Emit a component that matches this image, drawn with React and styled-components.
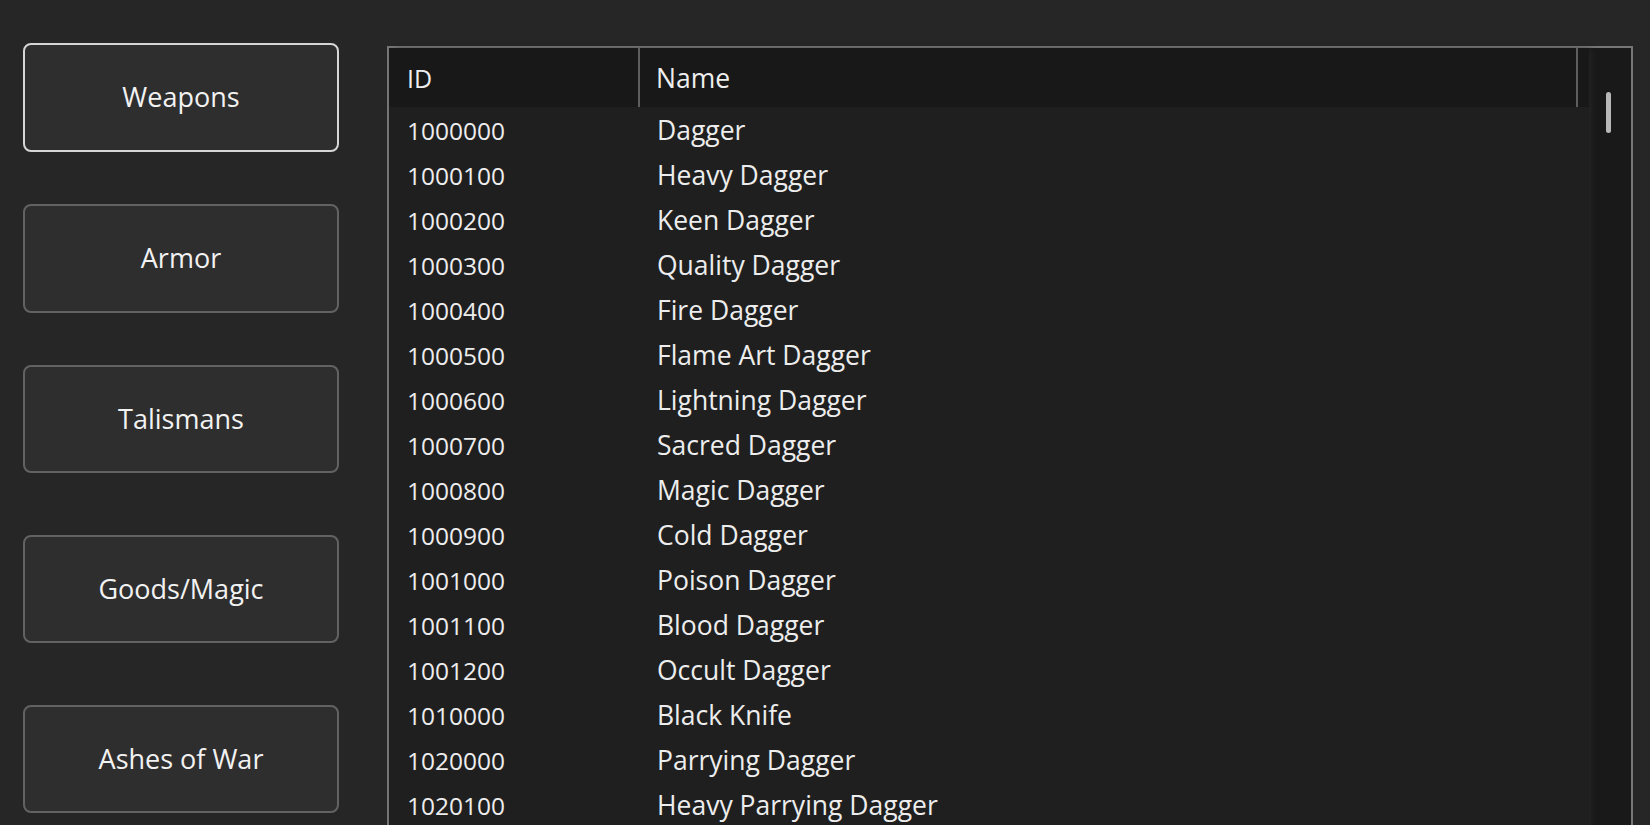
import React from "react";
import styled, { createGlobalStyle } from "styled-components";

const Global = createGlobalStyle`
  html, body { margin: 0; padding: 0; background: #262626; }
  body { font-family: "Open Sans", "Noto Sans", "Liberation Sans", sans-serif; color: #ececec; }
`;

const Page = styled.div`
  display: flex;
  height: 825px;
  overflow: hidden;
  background: #262626;
`;

const Sidebar = styled.nav`
  display: flex;
  flex-direction: column;
  padding: 43px 0 0 23px;
  width: 316px;
  flex-shrink: 0;
`;

const CategoryButton = styled.button`
  box-sizing: border-box;
  width: 316px;
  height: ${(p) => p.$h}px;
  margin-top: ${(p) => p.$mt}px;
  border-radius: 8px;
  border: 2px solid ${(p) => (p.$active ? "#d6d6d6" : "#626262")};
  background: #2e2e2e;
  color: #f2f2f2;
  font-family: "Open Sans", "Noto Sans", sans-serif;
  font-size: 27px;
  display: flex;
  align-items: center;
  justify-content: center;
  padding: 0 0 2px;
  cursor: pointer;
`;

const Main = styled.main`
  margin-left: 48px;
  padding-top: 46px;
  width: 1246px;
  flex-shrink: 0;
`;

const Panel = styled.section`
  box-sizing: border-box;
  height: 900px;
  border: 2px solid #767676;
  display: flex;
  background: #1f1f1f;
`;

const Table = styled.div`
  flex: 1;
  display: flex;
  flex-direction: column;
  box-shadow: 4px 0 6px -2px rgba(40, 40, 40, 0.9);
  background: #1f1f1f;
  position: relative;
  z-index: 1;
`;

const HeaderRow = styled.div`
  display: grid;
  grid-template-columns: 251px 938px 1fr;
  height: 59px;
  background: #181818;
`;

const HeaderCell = styled.div`
  display: flex;
  align-items: center;
  padding-left: ${(p) => p.$pad}px;
  padding-top: 1px;
  font-size: ${(p) => p.$size || 26}px;
  color: #eeeeee;
  border-right: ${(p) => (p.$divider ? "2px solid #5e5e5e" : "none")};
`;

const Row = styled.div`
  display: grid;
  grid-template-columns: 251px 1fr;
  height: 45px;
  align-items: center;
`;

const Cell = styled.div`
  padding-left: ${(p) => p.$pad}px;
  font-size: ${(p) => p.$size}px;
  color: #ededed;
  white-space: nowrap;
  padding-top: 1px;
`;

const ScrollTrack = styled.div`
  width: 42px;
  flex-shrink: 0;
  background: #191919;
  display: flex;
  justify-content: flex-start;
  padding-left: 17px;
  box-sizing: border-box;
`;

const Thumb = styled.div`
  width: 5px;
  height: 41px;
  margin-top: 44px;
  border-radius: 3px;
  background: #b8b8b8;
`;

const categories = [
  { label: "Weapons", active: true, mt: 0, h: 109 },
  { label: "Armor", mt: 52, h: 109 },
  { label: "Talismans", mt: 52, h: 108 },
  { label: "Goods/Magic", mt: 62, h: 108 },
  { label: "Ashes of War", mt: 62, h: 108 },
];

const items = [
  ["1000000", "Dagger"],
  ["1000100", "Heavy Dagger"],
  ["1000200", "Keen Dagger"],
  ["1000300", "Quality Dagger"],
  ["1000400", "Fire Dagger"],
  ["1000500", "Flame Art Dagger"],
  ["1000600", "Lightning Dagger"],
  ["1000700", "Sacred Dagger"],
  ["1000800", "Magic Dagger"],
  ["1000900", "Cold Dagger"],
  ["1001000", "Poison Dagger"],
  ["1001100", "Blood Dagger"],
  ["1001200", "Occult Dagger"],
  ["1010000", "Black Knife"],
  ["1020000", "Parrying Dagger"],
  ["1020100", "Heavy Parrying Dagger"],
  ["1020200", "Keen Parrying Dagger"],
];

export default function App() {
  return (
    <>
      <Global />
      <Page>
        <Sidebar>
          {categories.map((c) => (
            <CategoryButton key={c.label} $active={c.active} $mt={c.mt} $h={c.h}>
              {c.label}
            </CategoryButton>
          ))}
        </Sidebar>
        <Main>
          <Panel>
            <Table>
              <HeaderRow>
                <HeaderCell $pad={18} $size={25} $divider>ID</HeaderCell>
                <HeaderCell $pad={16} $size={26.5} $divider>Name</HeaderCell>
                <HeaderCell />
              </HeaderRow>
              {items.map(([id, name]) => (
                <Row key={id}>
                  <Cell $pad={18} $size={24.5}>{id}</Cell>
                  <Cell $pad={17} $size={26.5}>{name}</Cell>
                </Row>
              ))}
            </Table>
            <ScrollTrack>
              <Thumb />
            </ScrollTrack>
          </Panel>
        </Main>
      </Page>
    </>
  );
}
